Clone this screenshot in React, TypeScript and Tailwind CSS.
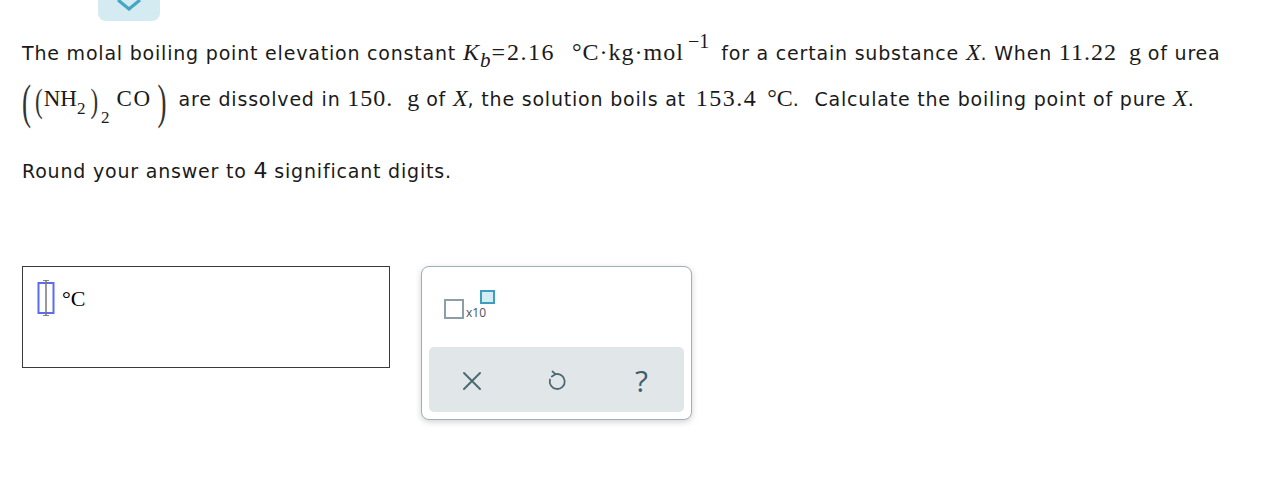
const sans = "font-['DejaVu_Sans',Verdana,sans-serif] tracking-[0.8px]";
const serif = "font-['Liberation_Serif','Times_New_Roman',serif]";

function M({
  children,
  italic,
  track = "tracking-normal",
  className = "",
}: {
  children: React.ReactNode;
  italic?: boolean;
  track?: string;
  className?: string;
}) {
  return (
    <span className={`${serif} text-[24px] ${track} ${italic ? "italic" : ""} ${className}`}>
      {children}
    </span>
  );
}

function BigParen({ ch, outer }: { ch: string; outer?: boolean }) {
  return (
    <span
      className={`${serif} tracking-normal inline-block text-[#333] relative ${
        outer ? "text-[27px] scale-y-[1.8] top-[5px]" : "text-[23px] scale-y-[1.5] top-[3px]"
      }`}
    >
      {ch}
    </span>
  );
}

function Undo() {
  return (
    <svg width="24" height="24" viewBox="0 0 24 24" fill="none" stroke="#4d6a74" strokeWidth="1.8" strokeLinecap="round" strokeLinejoin="round">
      <path d="M10.5 5.2 A7.5 7.5 0 1 1 5 10.5" />
      <path d="M7.5 2.5 L10.5 5.2 L6.8 7.6" />
    </svg>
  );
}

function Question() {
  return (
    <div className={`${sans} text-[19px] text-[#1a1a1a] pl-[22px]`}>
      <div className="flex items-baseline h-[30px] mt-[13px] whitespace-pre">
        <span>The molal boiling point elevation constant </span>
        <M italic>K</M>
        <span className={`${serif} tracking-normal italic text-[21px] relative top-[7px] ml-[1px]`}>b</span>
        <M className="ml-[1px]">=</M>
        <M className="ml-[2px]" track="tracking-[1.5px]">2.16</M>
        <M className="ml-[17px]" track="tracking-[1px]">°C·kg·mol</M>
        <span className={`${serif} tracking-normal text-[20px] relative -top-[12px] ml-[4px]`}>−1</span>
        <span className="ml-[12px]">for a certain substance </span>
        <M italic>X</M>
        <span>. When </span>
        <M track="tracking-[1px]">11.22</M>
        <M className="ml-[12px]">g</M>
        <span> of urea</span>
      </div>
      <div className="flex items-baseline h-[50px] mt-[13px] whitespace-pre">
        <span className={`${serif} tracking-normal text-[23px] inline-flex items-baseline`}>
          <BigParen ch="(" outer />
          <span className="ml-[4px]" />
          <BigParen ch="(" />
          <span className="ml-[1px]">NH</span>
          <span className="relative top-[8px] text-[17px]">2</span>
          <span className="ml-[5px]" />
          <BigParen ch=")" />
          <span className="relative top-[17px] text-[17px] ml-[3px]">2</span>
          <span className="ml-[7px] tracking-[1.5px]">CO</span>
          <span className="ml-[6px]" />
          <BigParen ch=")" outer />
        </span>
        <span className="ml-[12px]">are dissolved in </span>
        <M track="tracking-[1px]">150.</M>
        <M className="ml-[14px]">g</M>
        <span> of </span>
        <M italic>X</M>
        <span>, the solution boils at </span>
        <M className="ml-[3px]" track="tracking-[1.5px]">153.4</M>
        <M className="ml-[10px]">°C</M>
        <span>. </span>
        <span className="ml-[8px]">Calculate the boiling point of pure </span>
        <M italic>X</M>
        <span>.</span>
      </div>
      <div className="mt-[27px] h-[30px] flex items-baseline whitespace-pre">
        <span>Round your answer to </span>
        <span className="text-[22px] tracking-normal">4</span>
        <span> significant digits.</span>
      </div>
    </div>
  );
}

function Cursor() {
  return (
    <svg width="18" height="38" viewBox="0 0 18 38" className="shrink-0">
      <path d="M6 1.5 L12 1.5 M6 36.5 L12 36.5" stroke="#888" strokeWidth="1" />
      <rect x="1.5" y="4" width="15" height="30" fill="none" stroke="#5b6cf2" strokeWidth="2" />
      <line x1="9" y1="1" x2="9" y2="37" stroke="#777" strokeWidth="1.5" />
    </svg>
  );
}

function AnswerBox() {
  return (
    <div className="w-[368px] h-[102px] border border-[#3a3a3a] bg-white pl-[14px] pt-[12px]">
      <div className="flex items-center gap-[7px]">
        <Cursor />
        <span className="font-['Liberation_Serif',serif] text-[22px] text-black">°C</span>
      </div>
    </div>
  );
}

function Sci() {
  return (
    <div className="relative w-[52px] h-[31px]">
      <div className="absolute left-0 top-[9px] w-[20px] h-[20px] border-2 border-[#8d9fa6]" />
      <span className="absolute left-[22px] top-[17px] text-[12px] leading-none text-[#3e5660] font-['Open_Sans',sans-serif]">
        x10
      </span>
      <div className="absolute left-[36px] top-0 w-[15px] h-[14px] border-2 border-[#3f9dbd] bg-[#d4edf4]" />
    </div>
  );
}

function Panel() {
  return (
    <div className="w-[271px] h-[154px] rounded-[8px] border border-[#9cb0b8] bg-white shadow-[0_2px_6px_rgba(0,0,0,0.18)] flex flex-col px-[7px] pb-[7px]">
      <div className="h-[80px] pl-[15px] pt-[23px]">
        <Sci />
      </div>
      <div className="flex-1 rounded-[5px] bg-[#e1e6e9] grid grid-cols-3 place-items-center pt-[2px]">
        <svg width="22" height="22" viewBox="0 0 22 22" stroke="#4d6a74" strokeWidth="2" strokeLinecap="round">
          <path d="M3 3 L19 19 M19 3 L3 19" />
        </svg>
        <Undo />
        <span className="text-[#3f5e69] text-[30px] leading-none font-['Open_Sans',sans-serif] font-normal">?</span>
      </div>
    </div>
  );
}

export default function App() {
  return (
    <div className="w-[1268px] h-[492px] bg-white overflow-hidden">
      <div className="ml-[98px] w-[62px] h-[21px] rounded-b-[8px] bg-[#d3ebf1] flex justify-center">
        <svg width="26" height="11" viewBox="0 0 26 11">
          <polyline points="2,0 13,9 24,0" fill="none" stroke="#47a6c4" strokeWidth="3.2" />
        </svg>
      </div>
      <Question />
      <div className="flex items-start gap-[31px] pl-[22px] mt-[82px]">
        <AnswerBox />
        <Panel />
      </div>
    </div>
  );
}
